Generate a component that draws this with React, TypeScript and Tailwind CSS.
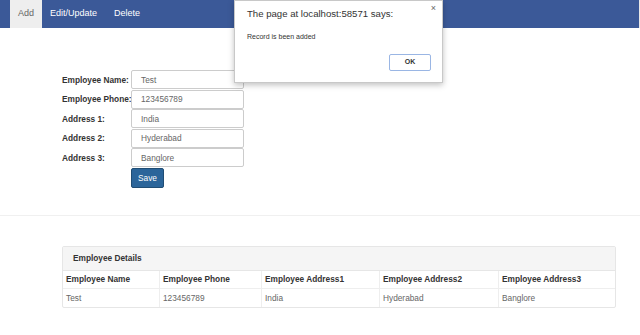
const fields = [
  { label: "Employee Name:", value: "Test" },
  { label: "Employee Phone:", value: "123456789" },
  { label: "Address 1:", value: "India" },
  { label: "Address 2:", value: "Hyderabad" },
  { label: "Address 3:", value: "Banglore" },
];

const columns = [
  { title: "Employee Name", value: "Test", w: "w-[96px]" },
  { title: "Employee Phone", value: "123456789", w: "w-[102px]" },
  { title: "Employee Address1", value: "India", w: "w-[118px]" },
  { title: "Employee Address2", value: "Hyderabad", w: "w-[119px]" },
  { title: "Employee Address3", value: "Banglore", w: "flex-1" },
];

export default function App() {
  return (
    <div className="relative w-[640px] h-[335px] overflow-hidden bg-white font-['Liberation_Sans',Arial,sans-serif] text-[#333]">
      {/* nav */}
      <div className="flex h-[28px] bg-[#3b5998] pl-[10px] text-[9px] border-r border-[#e8e8e8]">
        <div className="flex items-center px-[8px] w-[32px] bg-[#eeeeee] text-[#666]">Add</div>
        <div className="flex items-center pl-[8px] text-white">Edit/Update</div>
        <div className="flex items-center pl-[17px] text-white">Delete</div>
      </div>

      {/* form */}
      <div className="pl-[62px] pt-[42px]">
        {fields.map((f) => (
          <div key={f.label} className="flex items-center h-[19.5px]">
            <div className="w-[69px] text-[8.3px] font-bold text-[#333] whitespace-nowrap">
              {f.label}
            </div>
            <div className="w-[113px] h-[19px] border border-[#ccc] rounded-[2px] flex items-center pl-[9px] text-[8.3px] text-[#666]">
              {f.value}
            </div>
          </div>
        ))}
        <div className="pl-[69px] pt-[0.5px]">
          <div className="w-[33px] h-[20px] bg-[#2b659a] border border-[#204d74] rounded-[2px] flex items-center justify-center text-[8.3px] text-white">
            Save
          </div>
        </div>
      </div>

      <div className="mt-[27px] h-px bg-[#f0f0f0]" />

      {/* panel */}
      <div className="ml-[62px] mt-[30px] w-[554px] border border-[#e6e6e6] rounded-[2px]">
        <div className="h-[24px] bg-[#f5f5f5] border-b border-[#e6e6e6] flex items-center pl-[10px] text-[8.3px] font-bold text-[#333]">
          Employee Details
        </div>
        <div className="flex h-[18px] border-b border-[#eee]">
          {columns.map((c, i) => (
            <div
              key={c.title}
              className={`${c.w} flex items-center pl-[3px] text-[8.3px] font-bold text-[#333] ${i > 0 ? "border-l border-[#eee]" : ""}`}
            >
              {c.title}
            </div>
          ))}
        </div>
        <div className="flex h-[18px]">
          {columns.map((c, i) => (
            <div
              key={c.title}
              className={`${c.w} flex items-center pl-[3px] text-[8.3px] text-[#666] ${i > 0 ? "border-l border-[#eee]" : ""}`}
            >
              {c.value}
            </div>
          ))}
        </div>
      </div>

      {/* alert dialog */}
      <div className="absolute left-[234px] top-0 w-[209px] h-[83px] bg-white border border-[#c8c8c8] shadow-[0_2px_6px_rgba(0,0,0,0.25)]">
        <div className="absolute right-[6px] top-[1px] text-[9px] text-[#666]">×</div>
        <div className="pl-[12px] pt-[6px] text-[9.6px] text-[#333]">
          The page at localhost:58571 says:
        </div>
        <div className="pl-[12px] pt-[11px] text-[7px] text-[#333]">Record is been added</div>
        <div className="absolute left-[154px] top-[53px] w-[42px] h-[17px] border border-[#9ab6e4] rounded-[2px] bg-white flex items-center justify-center text-[7px] font-bold text-[#333]">
          OK
        </div>
      </div>
    </div>
  );
}
